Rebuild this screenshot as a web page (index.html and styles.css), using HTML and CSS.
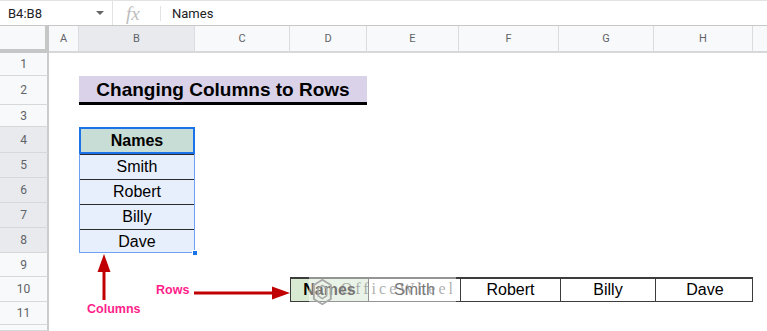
FILE: index.html
```
<!DOCTYPE html>
<html lang="en">
<head>
    <meta charset="UTF-8">
    <meta name="viewport" content="width=device-width, initial-scale=1.0">
    <title>Changing Columns to Rows</title>
    <link rel="stylesheet" href="styles.css">
</head>
<body>
    <div class="formula-bar">
        <div class="name-box">
            <span class="range">B4:B8</span>
            <span class="caret"></span>
        </div>
        <div class="fx">fx</div>
        <div class="formula-text">Names</div>
    </div>

    <div class="sheet">
        <!-- column headers -->
        <div class="corner"></div>
        <div class="col-head">A</div>
        <div class="col-head picked">B</div>
        <div class="col-head">C</div>
        <div class="col-head">D</div>
        <div class="col-head">E</div>
        <div class="col-head">F</div>
        <div class="col-head">G</div>
        <div class="col-head">H</div>
        <div class="col-head last"></div>

        <!-- row headers -->
        <div class="row-head r1">1</div>
        <div class="row-head r2">2</div>
        <div class="row-head r3">3</div>
        <div class="row-head r4 picked">4</div>
        <div class="row-head r5 picked">5</div>
        <div class="row-head r6 picked">6</div>
        <div class="row-head r7 picked">7</div>
        <div class="row-head r8 picked">8</div>
        <div class="row-head r9">9</div>
        <div class="row-head r10">10</div>
        <div class="row-head r11">11</div>
        <div class="row-head r12"></div>

        <!-- B2:D2 title -->
        <div class="title">Changing Columns to Rows</div>

        <!-- B4:B8 source list -->
        <div class="source">
            <div class="cell head active">Names</div>
            <div class="cell">Smith</div>
            <div class="cell">Robert</div>
            <div class="cell">Billy</div>
            <div class="cell">Dave</div>
            <span class="handle"></span>
        </div>

        <!-- D10:H10 transposed row -->
        <div class="result">
            <div class="cell head">Names</div>
            <div class="cell">Smith</div>
            <div class="cell">Robert</div>
            <div class="cell">Billy</div>
            <div class="cell">Dave</div>
        </div>

        <!-- annotations -->
        <svg class="arrow-up" width="16" height="46" viewBox="0 0 16 46">
            <polygon points="8,0 14.5,18 1.5,18" fill="#c00000"/>
            <rect x="6.5" y="16" width="3" height="30" fill="#c00000"/>
        </svg>
        <span class="note note-cols">Columns</span>
        <span class="note note-rows">Rows</span>
        <svg class="arrow-right" width="96" height="16" viewBox="0 0 96 16">
            <rect x="0" y="6.5" width="80" height="3" fill="#c00000"/>
            <polygon points="96,8 78,1.5 78,14.5" fill="#c00000"/>
        </svg>

        <div class="watermark">
            <svg class="wm-logo" width="22" height="30" viewBox="0 0 22 30">
                <polygon points="11,2 20,7.5 20,22.5 11,28 2,22.5 2,7.5" fill="none" stroke="#a8a8a8" stroke-width="2"/>
                <polygon points="11,8 15.5,10.8 15.5,19.2 11,22 6.5,19.2 6.5,10.8" fill="none" stroke="#a8a8a8" stroke-width="1.6"/>
            </svg>
            <span class="wm-text">OfficeWheel</span>
        </div>
    </div>
</body>
</html>
```

FILE: styles.css
```
* {
    box-sizing: border-box;
    margin: 0;
    padding: 0;
}

body {
    width: 767px;
    height: 331px;
    overflow: hidden;
    background: #fff;
    font-family: "Liberation Sans", Arial, sans-serif;
    color: #202124;
}

/* formula bar */
.formula-bar {
    display: flex;
    align-items: center;
    height: 26px;
    border-top: 1px solid #e2e3e3;
    border-bottom: 1px solid #c7c7c7;
    font-family: Roboto, "Liberation Sans", sans-serif;
    font-size: 13px;
}

.name-box {
    display: flex;
    align-items: center;
    justify-content: space-between;
    width: 113px;
    height: 100%;
    padding: 0 8px 0 8px;
    border-right: 1px solid #e2e3e3;
}

.caret {
    width: 0;
    height: 0;
    border-left: 4px solid transparent;
    border-right: 4px solid transparent;
    border-top: 4px solid #666;
}

.fx {
    width: 48px;
    height: 15px;
    padding-left: 13px;
    border-right: 1px solid #e2e3e3;
    font-family: "Liberation Serif", serif;
    font-style: italic;
    font-size: 19px;
    line-height: 15px;
    color: #bdbdbd;
}

.formula-text {
    padding-left: 11px;
}

/* grid */
.sheet {
    position: relative;
    display: grid;
    grid-template-columns: 49px 30px 116px 95px 77px 92px 100px 95px 99px 1fr;
    grid-template-rows: 27px 23px 29px 22px 26px 25px 25px 25px 25px 24px 25px 23px 1fr;
    height: 305px;
}

.corner {
    grid-row: 1;
    background: #f8f9fa;
    border-right: 4px solid #c4c7c5;
    border-bottom: 4px solid #c4c7c5;
}

.col-head,
.row-head {
    display: flex;
    align-items: center;
    justify-content: center;
    background: #f8f9fa;
    font-family: Roboto, "Liberation Sans", sans-serif;
    font-size: 11px;
    color: #5f6368;
}

.col-head {
    grid-row: 1;
    border-right: 1px solid #dadce0;
    border-bottom: 2px solid #d6d8da;
}

.col-head.last {
    border-right: none;
}

.row-head {
    grid-column: 1;
    border-right: 2px solid #c9cbcd;
    border-bottom: 1px solid #d6d8da;
    font-size: 12px;
}

.col-head.picked,
.row-head.picked {
    background: #e8eaed;
}

.r1 { grid-row: 2; }
.r2 { grid-row: 3; }
.r3 { grid-row: 4; }
.r4 { grid-row: 5; }
.r5 { grid-row: 6; }
.r6 { grid-row: 7; }
.r7 { grid-row: 8; }
.r8 { grid-row: 9; }
.r9 { grid-row: 10; }
.r10 { grid-row: 11; }
.r11 { grid-row: 12; }
.r12 { grid-row: 13; }

/* title */
.title {
    grid-column: 3 / 6;
    grid-row: 3;
    display: flex;
    align-items: center;
    justify-content: center;
    padding-top: 1px;
    background: #d9d2e9;
    border-bottom: 3px solid #000;
    font-weight: bold;
    font-size: 19px;
    color: #000;
}

.cell {
    display: flex;
    align-items: center;
    justify-content: center;
    font-size: 16px;
    color: #000;
}

.cell.head {
    font-weight: bold;
}

/* source list */
.source {
    position: relative;
    grid-column: 3;
    grid-row: 5 / 10;
    display: grid;
    grid-template-rows: 26px 25px 25px 25px 25px;
    border: 1px solid #6fa1f2;
    background: #e7effc;
}

.source .cell + .cell {
    border-top: 1px solid #2b2b2b;
}

.source .cell.active {
    margin: -1px -1px 0;
    background: #c8ddd5;
    border: 2px solid #1a73e8;
}

.handle {
    position: absolute;
    right: -4px;
    bottom: -4px;
    width: 6px;
    height: 6px;
    background: #1a73e8;
    border: 1px solid #fff;
}

/* transposed row */
.result {
    grid-column: 5 / 10;
    grid-row: 11;
    display: grid;
    grid-template-columns: 77px 92px 100px 95px 99px;
    border: 1px solid #3c3c3c;
    border-top-width: 2px;
}

.result .cell {
    border-left: 1px solid #3c3c3c;
}

.result .cell:first-child {
    border-left: none;
    background: #d9ead3;
}

/* annotations */
.arrow-up {
    position: absolute;
    left: 96px;
    top: 228px;
}

.arrow-right {
    position: absolute;
    left: 194px;
    top: 259px;
}

.note {
    position: absolute;
    font-weight: bold;
    font-size: 12.5px;
    color: #ff1e8a;
}

.note-cols {
    left: 87px;
    top: 276px;
}

.note-rows {
    left: 156px;
    top: 257px;
}

.watermark {
    position: absolute;
    left: 309px;
    top: 250px;
    width: 147px;
    height: 26px;
    display: flex;
    align-items: center;
    background: rgba(255, 255, 255, 0.45);
}

.wm-logo {
    margin-left: 3px;
    margin-top: 6px;
}

.wm-text {
    margin-left: 8px;
    font-family: "Liberation Serif", serif;
    font-size: 16px;
    letter-spacing: 3px;
    color: rgba(130, 130, 130, 0.65);
}
```
